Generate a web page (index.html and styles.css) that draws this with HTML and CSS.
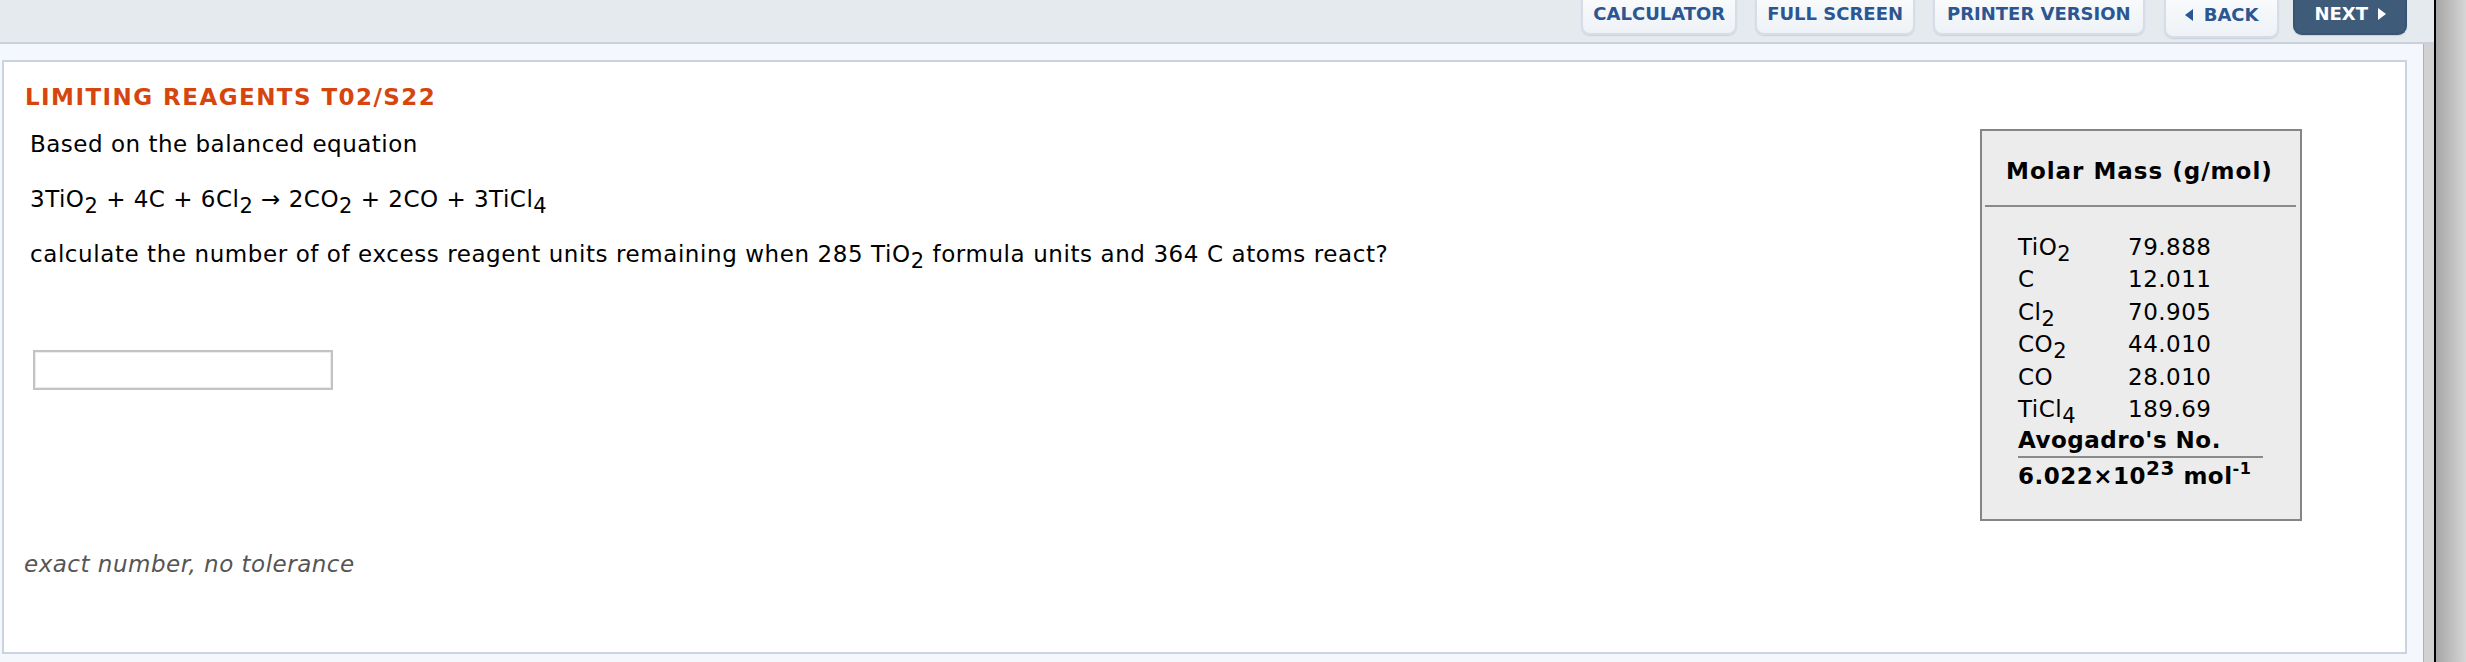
FILE: index.html
```html
<!DOCTYPE html>
<html lang="en">
<head>
<meta charset="utf-8">
<title>Limiting Reagents T02/S22</title>
<link rel="stylesheet" href="styles.css">
</head>
<body>
<div class="screen">
  <div class="window">
    <header class="topbar">
      <a class="btn">CALCULATOR</a>
      <a class="btn">FULL SCREEN</a>
      <a class="btn btn-wide">PRINTER VERSION</a>
      <a class="btn btn-back"><svg class="tri" width="8" height="12" viewBox="0 0 8 12"><polygon points="8,0 8,12 0,6" fill="#2c5691"/></svg>BACK</a>
      <a class="btn btn-next">NEXT<svg class="tri" width="8" height="12" viewBox="0 0 8 12"><polygon points="0,0 0,12 8,6" fill="#ffffff"/></svg></a>
    </header>
    <div class="stage-row">
      <main class="stage">
        <section class="card">
          <div class="question">
            <h1 class="title">LIMITING REAGENTS T02/S22</h1>
            <p class="para para-first">Based on the balanced equation</p>
            <p class="para">3TiO<sub class="sb">2</sub> + 4C + 6Cl<sub class="sb">2</sub> → 2CO<sub class="sb">2</sub> + 2CO + 3TiCl<sub class="sb">4</sub></p>
            <p class="para para-long">calculate the number of of excess reagent units remaining when 285 TiO<sub class="sb">2</sub> formula units and 364 C atoms react?</p>
            <input class="answer" type="text">
            <p class="hint">exact number, no tolerance</p>
          </div>
          <aside class="molar">
            <div class="molar-title">Molar Mass (g/mol)</div>
            <div class="molar-rule"></div>
            <div class="molar-rows">
              <div class="row"><span class="name">TiO<sub class="sb">2</sub></span><span class="val">79.888</span></div>
              <div class="row"><span class="name">C</span><span class="val">12.011</span></div>
              <div class="row"><span class="name">Cl<sub class="sb">2</sub></span><span class="val">70.905</span></div>
              <div class="row"><span class="name">CO<sub class="sb">2</sub></span><span class="val">44.010</span></div>
              <div class="row"><span class="name">CO</span><span class="val">28.010</span></div>
              <div class="row"><span class="name">TiCl<sub class="sb">4</sub></span><span class="val">189.69</span></div>
              <div class="avo">Avogadro's No.</div>
              <div class="avo-val">6.022×10<sup class="sp">23</sup> mol<sup class="sp sp-small">-1</sup></div>
            </div>
          </aside>
        </section>
      </main>
      <div class="track"></div>
    </div>
  </div>
  <div class="desk"></div>
</div>
</body>
</html>
```

FILE: styles.css
```css
html, body {
  margin: 0;
  padding: 0;
  height: 100%;
  overflow: hidden;
}

body {
  font-family: "DejaVu Sans", Verdana, sans-serif;
  color: #000;
  background: #f4f7fb;
}

.screen {
  display: flex;
  height: 662px;
}

.window {
  width: 2434px;
  display: flex;
  flex-direction: column;
  border-right: 2px solid #000;
}

.desk {
  flex: 1;
  background: linear-gradient(to right, #a6a6a6, #d6d6d6);
}

/* top bar */
.topbar {
  height: 42px;
  background: #e5eaef;
  border-bottom: 2px solid #c9d1dd;
  display: flex;
  justify-content: flex-end;
  align-items: flex-start;
  padding-right: 27px;
}

.btn {
  display: flex;
  align-items: flex-start;
  gap: 10px;
  height: 20px;
  padding: 4px 10px 9px 10px;
  margin-left: 18px;
  font-weight: bold;
  font-size: 18px;
  line-height: 20px;
  color: #2c5691;
  background: linear-gradient(#f8fafc, #eef2f6);
  border: 2px solid #d6dde6;
  border-top: none;
  border-radius: 0 0 9px 9px;
  box-shadow: 0 1px 1px rgba(120, 135, 155, 0.25);
  white-space: nowrap;
}

.btn .tri {
  margin-top: 4px;
}

.btn-wide {
  padding-left: 12px;
  padding-right: 12px;
}

.btn-back {
  padding: 5px 19px 11px 19px;
  margin-left: 19px;
  gap: 11px;
}

.btn-next {
  margin-left: 14px;
  padding: 4px 19px 9px 19px;
  color: #fff;
  background: #3e5b7a;
  border-color: #395572;
}

/* stage */
.stage-row {
  flex: 1;
  display: flex;
}

.stage {
  flex: 1;
  padding: 16px 16px 0 2px;
  background: #f4f7fb;
}

.track {
  width: 10px;
  background: #d2d2d2;
  border-left: 1px solid #b2b2b2;
}

.card {
  display: flex;
  align-items: flex-start;
  background: #fff;
  border: 2px solid #cbd3e0;
  padding: 21px 103px 74px 21px;
}

.question {
  flex: 1;
  font-size: 23px;
  letter-spacing: 0.5px;
  line-height: 28px;
}

.title {
  margin: 0;
  font-size: 23px;
  font-weight: bold;
  line-height: 28px;
  letter-spacing: 1.45px;
  color: #d7450e;
}

.para {
  margin: 27px 0 0 5px;
}

.para-first {
  margin-top: 19px;
}

.para-long {
  letter-spacing: 0.58px;
}

.sb {
  font-size: 21px;
  line-height: 0;
  vertical-align: baseline;
  position: relative;
  top: 6px;
}

.answer {
  display: block;
  box-sizing: border-box;
  width: 300px;
  height: 40px;
  margin: 82px 0 0 8px;
  border: 2px solid #c3c3c3;
  box-shadow: inset 0 0 0 1px #ececec;
  background: #fff;
  padding: 0;
}

.hint {
  margin: 160px 0 0 -1px;
  font-style: italic;
  color: #555;
}

/* molar mass table */
.molar {
  width: 318px;
  margin-top: 46px;
  background: #ececec;
  border: 2px solid #858585;
  padding: 26px 0 27px 0;
  font-size: 23px;
  letter-spacing: 0.5px;
}

.molar-title {
  padding-left: 24px;
  font-weight: bold;
  line-height: 28px;
  letter-spacing: 1px;
}

.molar-rule {
  height: 2px;
  background: #8a8a8a;
  margin: 20px 4px 0 3px;
}

.molar-rows {
  padding: 24px 0 0 36px;
  line-height: 32.4px;
}

.row {
  display: flex;
}

.name {
  width: 110px;
}

.avo {
  font-weight: bold;
  width: 245px;
  border-bottom: 2px solid #8a8a8a;
  line-height: 30.4px;
}

.avo-val {
  font-weight: bold;
  line-height: 32.4px;
  padding-top: 2px;
}

.sp {
  font-size: 20px;
  line-height: 0;
  vertical-align: baseline;
  position: relative;
  top: -9px;
}

.sp-small {
  font-size: 16px;
  top: -10px;
}
```
